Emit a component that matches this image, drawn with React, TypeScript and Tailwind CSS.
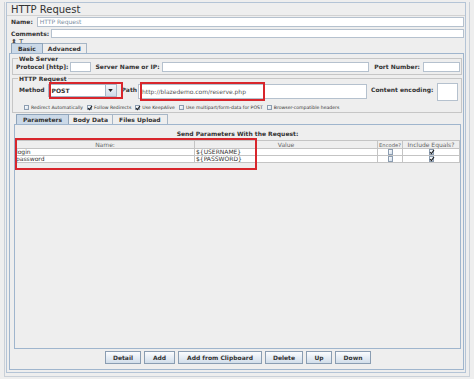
import React from "react";

const Box = ({ checked, h = 5 }: { checked?: boolean; h?: number }) => (
  <span
    className={`relative inline-block w-[5px] ${h === 6 ? "h-[6px]" : "h-[5px]"} shrink-0 border border-[#8c9db1] bg-gradient-to-br from-white to-[#d3deea]`}
  >
    {checked && (
      <svg viewBox="0 0 6 6" className="absolute left-[-1px] top-[-1px] w-[6px] h-[6px]">
        <path d="M1 3 L2.4 4.6 L5 1" stroke="#1e1e1e" strokeWidth="1.1" fill="none" />
      </svg>
    )}
  </span>
);

const Opt = ({ label, checked }: { label: string; checked?: boolean }) => (
  <div className="flex items-center gap-[2px] whitespace-nowrap">
    <Box checked={checked} />
    <span className="text-[4.6px] leading-[7px] text-[#333]">{label}</span>
  </div>
);

const Btn = ({ label, w }: { label: string; w: string }) => (
  <div
    className={`${w} h-[13px] flex items-center justify-center border border-[#8a9db2] bg-gradient-to-b from-[#fbfcfe] via-[#e6edf5] to-[#d2deea] text-[6px] font-bold leading-[8px] text-[#333] whitespace-nowrap`}
  >
    {label}
  </div>
);

export default function App() {
  return (
    <div className="w-[474px] h-[379px] bg-[#eeeeee] overflow-hidden font-['DejaVu_Sans',sans-serif] text-[#333333] pl-[4px]">
      {/* outer frame A */}
      <div className="w-[466px] h-[375px] border-l border-r border-b border-[#c9d0d8]">
        {/* frame B */}
        <div className="ml-[1px] mt-[2px] w-[460px] h-[371px] border border-[#b4c4d6] flex flex-col">
          {/* title */}
          <div className="pl-[4px] pt-[2px] leading-[10px] text-[10px] border-b border-[#d2d2d2] h-[13px]">
            HTTP Request
          </div>
          {/* name */}
          <div className="mt-[1px] flex items-center h-[10px] pl-[4px] pr-[1px]">
            <span className="text-[6px] font-bold leading-[8px] whitespace-nowrap">Name:</span>
            <div className="ml-[4px] flex-1 h-[10px] bg-white border border-[#b5c1ce] text-[6px] leading-[8px] text-[#7d8fa3] pl-[2px]">
              HTTP Request
            </div>
          </div>
          {/* comments */}
          <div className="mt-[2px] flex items-center h-[9px] pl-[4px] pr-[1px]">
            <span className="text-[6px] font-bold leading-[8px] whitespace-nowrap">Comments:</span>
            <div className="ml-[2px] flex-1 h-[9px] bg-white border border-[#b5c1ce]" />
          </div>
          {/* partially hidden row */}
          <div className="h-[5px] overflow-hidden pl-[4px] text-[7px] leading-[8px] text-[#444]">
            ⬍ T
          </div>
          {/* tabs */}
          <div className="flex h-[10px] pl-[4px]">
            <div className="px-[6px] bg-[#cbd9e8] border-t border-l border-r border-[#8fa4ba] text-[6px] font-bold leading-[9px]">
              Basic
            </div>
            <div className="px-[5px] bg-[#eeeeee] border-t border-r border-[#a7b6c6] text-[6px] font-bold leading-[9px]">
              Advanced
            </div>
          </div>
          {/* basic panel */}
          <div className="ml-[2px] w-[455px] h-[317px] border border-[#9fb5cd] flex flex-col">
            {/* web server */}
            <fieldset className="mt-[1px] ml-[2px] w-[450px] border border-[#c6c6c6] pl-[3px] pr-[1px] pb-[2px]">
              <legend className="ml-[2px] px-[1px] text-[6px] font-bold leading-[7px]">Web Server</legend>
              <div className="flex items-center h-[10px] text-[6px] font-bold leading-[8px] whitespace-nowrap">
                <span>Protocol [http]:</span>
                <div className="ml-[2px] w-[21px] h-[10px] bg-white border border-[#b5c1ce]" />
                <span className="ml-[4px]">Server Name or IP:</span>
                <div className="ml-[2px] flex-1 h-[10px] bg-white border border-[#b5c1ce]" />
                <span className="ml-[5px]">Port Number:</span>
                <div className="ml-[3px] w-[37px] h-[10px] bg-white border border-[#b5c1ce]" />
              </div>
            </fieldset>
            {/* http request */}
            <fieldset className="ml-[2px] w-[450px] border border-[#c6c6c6] pl-[3px] pr-[1px] pb-[1px]">
              <legend className="ml-[2px] px-[1px] text-[6px] font-bold leading-[7px]">HTTP Request</legend>
              <div className="relative mt-[1px] flex items-start h-[18px] pl-[3px] text-[6px] font-bold leading-[7px] whitespace-nowrap">
                <span className="mt-[3px]">Method</span>
                <div className="ml-[3px] mt-[1px] w-[69px] h-[13px] bg-white border border-[#a7b6c6] flex">
                  <span className="flex-1 pl-[3px] leading-[11px]">POST</span>
                  <div className="w-[11px] h-full border-l border-[#a7b6c6] bg-gradient-to-b from-[#f4f7fb] to-[#cfdbe8] flex items-center justify-center">
                    <svg viewBox="0 0 6 4" className="w-[5px] h-[3px]">
                      <path d="M0 0 L6 0 L3 4 Z" fill="#222" />
                    </svg>
                  </div>
                </div>
                <span className="ml-[5px] mt-[3px]">Path</span>
                <div className="ml-[1px] mt-[1px] w-[229px] h-[15px] bg-white border border-[#b5c1ce] font-normal text-[#555] pl-[3px] leading-[13px]">
                  http://blazedemo.com/reserve.php
                </div>
                <span className="ml-[4px] mt-[3px]">Content encoding:</span>
                <div className="ml-[4px] w-[21px] h-[18px] bg-white border border-[#b5c1ce]" />
                {/* red highlight boxes */}
                <div className="absolute left-[33px] top-[-1px] w-[74px] h-[17px] border-2 border-[#d8262c]" />
                <div className="absolute left-[124px] top-[-1px] w-[125px] h-[19px] border-2 border-[#d8262c]" />
              </div>
              <div className="mt-[3px] h-[7px] flex items-center gap-[4px] pl-[8px]">
                <Opt label="Redirect Automatically" />
                <Opt label="Follow Redirects" checked />
                <Opt label="Use KeepAlive" checked />
                <Opt label="Use multipart/form-data for POST" />
                <Opt label="Browser-compatible headers" />
              </div>
            </fieldset>
            {/* inner tabs */}
            <div className="mt-[1px] flex h-[10px] pl-[6px] text-[6px] font-bold leading-[9px]">
              <div className="px-[6px] bg-[#cbd9e8] border-t border-l border-r border-[#8fa4ba]">Parameters</div>
              <div className="px-[4px] border-t border-r border-[#a7b6c6]">Body Data</div>
              <div className="px-[6px] border-t border-r border-[#a7b6c6]">Files Upload</div>
            </div>
            {/* parameters panel */}
            <div className="relative ml-[4px] w-[447px] h-[225px] border border-[#9fb5cd] flex flex-col">
              <div className="mt-[5px] text-center text-[6px] font-bold leading-[8px]">
                Send Parameters With the Request:
              </div>
              <div className="mt-[2px] ml-[1px] w-[444px] text-[6px] leading-[6px]">
                <div className="flex h-[9px] border-t border-b border-[#c4c4c4] text-[#666]">
                  <div className="w-[179px] border-r border-[#c4c4c4] flex items-center justify-center">Name:</div>
                  <div className="w-[183px] border-r border-[#c4c4c4] flex items-center justify-center">Value</div>
                  <div className="w-[25px] border-r border-[#c4c4c4] flex items-center justify-center text-[5.2px] whitespace-nowrap">Encode?</div>
                  <div className="flex-1 border-r border-[#c4c4c4] flex items-center justify-center whitespace-nowrap">Include Equals?</div>
                </div>
                {[
                  ["login", "${USERNAME}"],
                  ["password", "${PASSWORD}"],
                ].map(([n, v]) => (
                  <div key={n} className="flex h-[7px] border-b border-[#c4c4c4] bg-white text-[#333]">
                    <div className="w-[179px] border-r border-[#c4c4c4] flex items-center">{n}</div>
                    <div className="w-[183px] border-r border-[#c4c4c4] flex items-center pl-[1px]">{v}</div>
                    <div className="w-[25px] border-r border-[#c4c4c4] flex items-center justify-center">
                      <Box h={6} />
                    </div>
                    <div className="flex-1 border-r border-[#c4c4c4] flex items-center justify-center">
                      <Box h={6} checked />
                    </div>
                  </div>
                ))}
              </div>
              <div className="absolute left-0 top-[13px] w-[242px] h-[32px] border-2 border-[#d8262c]" />
            </div>
            {/* buttons */}
            <div className="mt-[2px] flex justify-center gap-[3px] pl-[3px]">
              <Btn label="Detail" w="w-[36px]" />
              <Btn label="Add" w="w-[31px]" />
              <Btn label="Add from Clipboard" w="w-[84px]" />
              <Btn label="Delete" w="w-[38px]" />
              <Btn label="Up" w="w-[26px]" />
              <Btn label="Down" w="w-[36px]" />
            </div>
          </div>
        </div>
      </div>
    </div>
  );
}
